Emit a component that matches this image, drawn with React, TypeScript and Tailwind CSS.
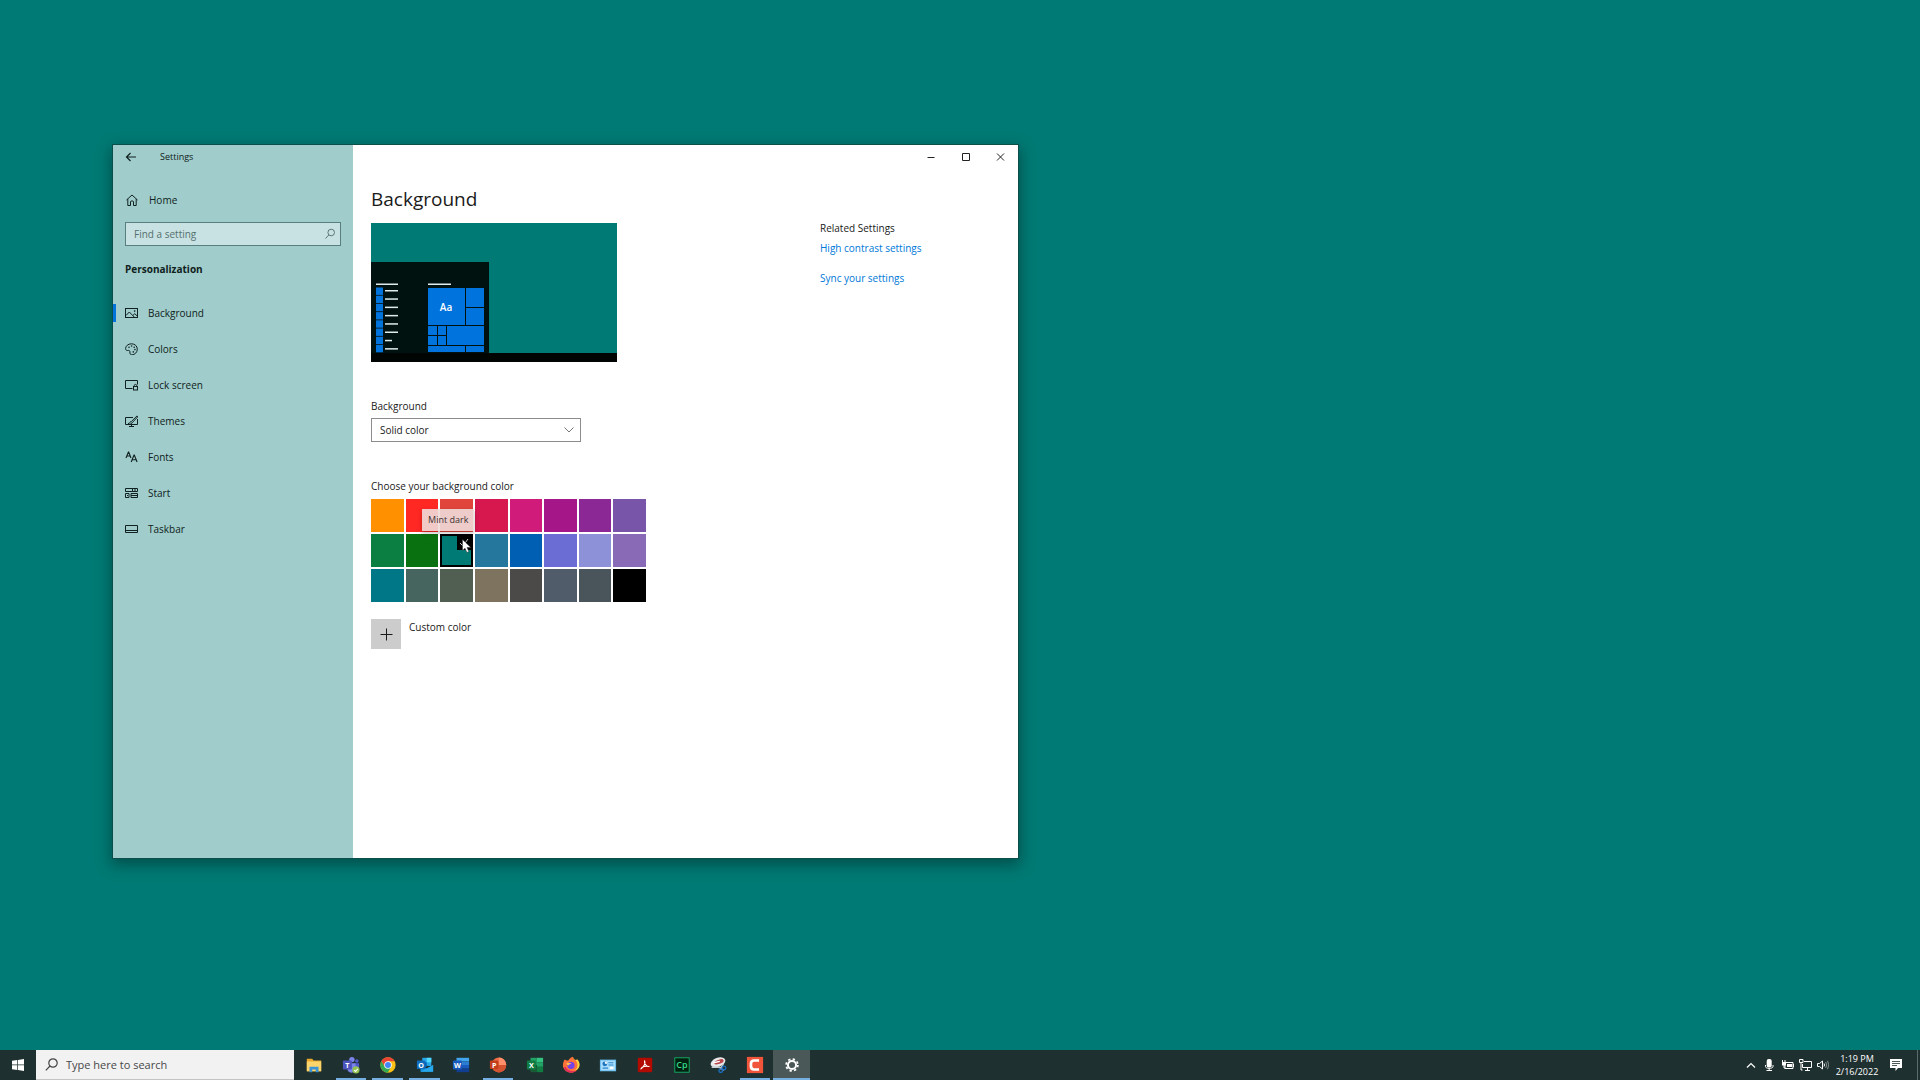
import React, { useState } from 'react'

const ink = { fill: 'none', stroke: 'currentColor', strokeWidth: 1 }

const navItems = [
  {
    name: 'Background',
    icon: <g {...ink}><rect x=".5" y="1.5" width="12" height="9" /><path d="M1 8.5 4.3 5l5.4 5.5M8 8.3l1.8-1.6 2.5 2.4" /><circle cx="9.7" cy="4" r=".5" /></g>,
  },
  {
    name: 'Colors',
    icon: <g {...ink}><path d="M6.5.8C3 .8.6 3 .6 5.6c0 1.5 1 2.2 2.1 1.9 1.3-.4 2.3.1 2.2 1.4-.2 1.8.5 3 2 3 2.8 0 5.4-2.6 5.4-5.7C12.3 3 9.9.8 6.5.8Z" /><g fill="currentColor" stroke="none"><circle cx="4" cy="4.3" r=".8" /><circle cx="6.6" cy="3" r=".8" /><circle cx="9.2" cy="4.2" r=".8" /><circle cx="9.9" cy="6.6" r=".8" /><circle cx="8.3" cy="8.9" r=".8" /></g></g>,
  },
  {
    name: 'Lock screen',
    icon: <g {...ink}><path d="M7.5 9.5h-7v-8h12v4" /><rect x="8.5" y="7.5" width="4" height="3.5" /><path d="M9.3 7.5V6.3c0-1.2 2.4-1.2 2.4 0v1.2" /></g>,
  },
  {
    name: 'Themes',
    icon: <g {...ink}><path d="M8 2.5H.5v7h12V4M4 11.5h5M6.5 9.5v2" /><path d="M12 .9 6.3 6.6l1 1L12.6 2ZM6.1 6.8C4.6 6.7 4.7 8.3 3.2 8.6c1.6.9 3.7.5 3.9-.9" /></g>,
  },
  {
    name: 'Fonts',
    icon: <g {...ink}><path d="M1 7 3.4 1h.3L6 7M1.8 5h3.5M6.2 11 9 4h.3l2.8 7M7.1 8.7h4.1" strokeWidth="1.1" /></g>,
  },
  {
    name: 'Start',
    icon: <g {...ink}><path d="M.5 1.5h7v3h-7zM7.5 1.5h5v3h-5zM.5 6.5h3.5v4H.5zM6 6.5h6.5v4H6zM6 8.5h6.5M10 1.5v3M2 8.5h1" /></g>,
  },
  {
    name: 'Taskbar',
    icon: <g {...ink}><path d="M.5 2.5h12v7H.5zM.5 7.5h12" /></g>,
  },
]

const colors = [
  { name: 'Yellow gold', bg: 'bg-[#ff9100]' },
  { name: 'Red', bg: 'bg-[#ff2823]' },
  { name: 'Pale red', bg: 'bg-[#e0443a]' },
  { name: 'Rose bright', bg: 'bg-[#d6184f]' },
  { name: 'Rose', bg: 'bg-[#d01b7b]' },
  { name: 'Plum light', bg: 'bg-[#a51688]' },
  { name: 'Orchid light', bg: 'bg-[#8c2796]' },
  { name: 'Iris', bg: 'bg-[#7855a9]' },
  { name: 'Meadow green', bg: 'bg-[#0b7e41]' },
  { name: 'Green', bg: 'bg-[#0a7110]' },
  { name: 'Mint dark', bg: 'bg-[#007a74]' },
  { name: 'Seafoam', bg: 'bg-[#26779e]' },
  { name: 'Default blue', bg: 'bg-[#005fb2]' },
  { name: 'Purple shadow', bg: 'bg-[#6b6dd5]' },
  { name: 'Lilac', bg: 'bg-[#8c91d8]' },
  { name: 'Violet', bg: 'bg-[#896ab6]' },
  { name: 'Teal', bg: 'bg-[#007787]' },
  { name: 'Liddy green', bg: 'bg-[#47655f]' },
  { name: 'Moss', bg: 'bg-[#505f52]' },
  { name: 'Camouflage', bg: 'bg-[#7e735f]' },
  { name: 'Overcast', bg: 'bg-[#4c4a48]' },
  { name: 'Metal blue', bg: 'bg-[#515c6b]' },
  { name: 'Storm', bg: 'bg-[#4a545b]' },
  { name: 'Black', bg: 'bg-black' },
]

const letter = { fill: '#fff', fontWeight: 700, fontFamily: 'Open Sans, sans-serif', textAnchor: 'middle' as const }

const taskbarApps = [
  {
    name: 'File Explorer',
    icon: <><path d="M2 3h6l1.5 2H18v12H2z" fill="#e8a62a" /><path d="M2 6h16v11H2z" fill="#fbd56b" /><path d="M5 12h10v6h-3v-3H8v3H5z" fill="#3a93d6" /></>,
  },
  {
    name: 'Microsoft Teams',
    open: true,
    icon: <><circle cx="11" cy="4" r="3" fill="#7b83eb" /><circle cx="16.5" cy="5.5" r="2" fill="#5059c9" /><path d="M13 8h6v6c0 2-2 3-4 3z" fill="#5059c9" /><path d="M6 8h9v6a4.5 4.5 0 0 1-9 0z" fill="#7b83eb" /><rect x="1" y="5" width="10" height="10" rx="1" fill="#4b53bc" /><text x="6" y="13" fontSize="8" {...letter}>T</text><circle cx="15.5" cy="15.5" r="4" fill="#92c353" /><path d="m13.5 15.6 1.5 1.5 2.6-2.8" fill="none" stroke="#fff" strokeWidth="1.2" /></>,
  },
  {
    name: 'Google Chrome',
    open: true,
    icon: <><circle cx="10" cy="10" r="8.5" fill="#fbc116" /><path d="M10 5.8h7.4A8.5 8.5 0 0 0 2.6 5.8L6.4 12Z" fill="#ea4335" /><path d="M2.6 5.8a8.5 8.5 0 0 0 7 12.7L13.6 12 6.4 12Z" fill="#34a853" /><circle cx="10" cy="10" r="4.2" fill="#fff" /><circle cx="10" cy="10" r="3.3" fill="#4285f4" /></>,
  },
  {
    name: 'Outlook',
    open: true,
    icon: <><path d="M7 2h10v9H7z" fill="#28a8ea" /><path d="M12 2h5v5h-5z" fill="#50d9ff" /><path d="M7 7h5v5H7z" fill="#0364b8" /><path d="M5 10l7 4 7-4v7.5H5z" fill="#1490df" /><path d="m5 17.5 14-7.5v7.5z" fill="#28a8ea" /><rect x="1" y="5" width="9.5" height="9.5" rx="1" fill="#0f6cbd" /><text x="5.8" y="12.8" fontSize="8" {...letter}>O</text></>,
  },
  {
    name: 'Word',
    icon: <><path d="M5 2h14v4H5z" fill="#41a5ee" /><path d="M5 6h14v4H5z" fill="#2b7cd3" /><path d="M5 10h14v4H5z" fill="#185abd" /><path d="M5 14h14v4H5z" fill="#103f91" /><rect x="1" y="5" width="10" height="10" rx="1" fill="#185abd" /><text x="6" y="13" fontSize="8" {...letter}>W</text></>,
  },
  {
    name: 'PowerPoint',
    open: true,
    icon: <><circle cx="11" cy="10" r="8.2" fill="#ed6c47" /><path d="M11 1.8a8.2 8.2 0 0 1 8.2 8.2H11z" fill="#ff8f6b" /><path d="M2.8 10h16.4a8.2 8.2 0 0 1-16.4 0z" fill="#d35230" /><rect x="1" y="5" width="9.5" height="9.5" rx="1" fill="#c43e1c" /><text x="5.8" y="12.8" fontSize="8" {...letter}>P</text></>,
  },
  {
    name: 'Excel',
    icon: <><path d="M5 2h7v8H5z" fill="#21a366" /><path d="M12 2h7v5h-7z" fill="#33c481" /><path d="M12 7h7v5h-7z" fill="#21a366" /><path d="M5 10h7v8H5z" fill="#185c37" /><path d="M12 12h7v6h-7z" fill="#107c41" /><rect x="1" y="5" width="10" height="10" rx="1" fill="#107c41" /><text x="6" y="13" fontSize="8" {...letter}>X</text></>,
  },
  {
    name: 'Firefox',
    icon: <><path d="M4 4.5C5 5 6 5.2 7 5c2-3 4-4 5-4.2 0 2 2 3 3.5 4 1-.3 1-.8 1-1.3 3 4 2.8 8 1 11a9 9 0 0 1-15.5-.5C0 10.5 1.5 6 3 4z" fill="#ff7139" /><path d="M12 .8c0 2 2 3 3.5 4.500 2.500 3 2.500 8-1.500 11 7-2 7-9 2.500-13 0 .5 0 1-1 1.500C14 3.500 12.500 2.500 12 .8z" fill="#ffd43d" /><path d="M2 13a9 9 0 0 0 15 2.500C12 18 6 17 4 12z" fill="#e5285e" /><circle cx="10" cy="10.5" r="4" fill="#7542e5" /><path d="M5 8c2-1 4 0 5.500 0-1 1.500-3 1-3 2.500C6 10.500 5.500 9.500 5 8z" fill="#ffbd4f" /></>,
  },
  {
    name: 'Control Panel',
    icon: <><rect x="1" y="4" width="18" height="13" fill="#5fb8ee" /><rect x="2" y="5" width="16" height="11" fill="#a9dcf8" /><circle cx="6.5" cy="8.7" r="2.7" fill="#1d74c2" /><path d="M6.5 8.7V6a2.7 2.7 0 0 1 2.7 2.7z" fill="#fff" /><path d="M10.5 7.500H16M10.500 10H16M4 13.500h6" stroke="#2d87cf" strokeWidth="1.2" /><rect x="12" y="12" width="4" height="2.500" fill="#fff" /></>,
  },
  {
    name: 'Adobe Acrobat',
    icon: <><rect x="2" y="2" width="16" height="16" rx="1.5" fill="#b30b00" /><path d="M9.500 5.300c1.500 4-1 6.700-4 9 1-2.500 5.500-3.500 9-2.600-3 0-5.500-3-5-6.400z" fill="none" stroke="#fff" strokeWidth="1.3" strokeLinejoin="round" /></>,
  },
  {
    name: 'Adobe Captivate',
    icon: <><rect x="2" y="2" width="16" height="16" fill="#00200f" stroke="#17b26a" /><text x="10" y="13.3" fontSize="10" {...letter} fontWeight={600} fill="#37d98b">Cp</text></>,
  },
  {
    name: 'Snipping Tool',
    icon: <><ellipse cx="10" cy="7" rx="8.5" ry="5" transform="rotate(-20 10 7)" fill="#e9e9ec" /><ellipse cx="11" cy="6.5" rx="5.5" ry="2.3" transform="rotate(-20 11 6.5)" fill="#b9454a" /><path d="M5 7.500 12 6" stroke="#fff" strokeWidth="1.5" /><path d="M3 12.500h9l4 4M16 9l-4 6" stroke="#c4ccd2" strokeWidth="1.5" fill="none" /><circle cx="13" cy="16.3" r="2" fill="none" stroke="#1c6dc0" strokeWidth="1.5" /><circle cx="16.7" cy="13.3" r="2" fill="none" stroke="#1c6dc0" strokeWidth="1.5" /></>,
  },
  {
    name: 'Camtasia',
    open: true,
    icon: <><rect x="1" y="1" width="18" height="18" fill="#f0553c" /><path d="M14.500 5H9Q5.500 5 5.500 8.500v3Q5.500 15 9 15h5.500" fill="none" stroke="#fff" strokeWidth="3" /></>,
  },
  {
    name: 'Settings',
    active: true,
    icon: <g fill="none" stroke="#fff"><circle cx="10" cy="10" r="4.5" strokeWidth="2.2" /><circle cx="10" cy="10" r="6.5" strokeWidth="2" strokeDasharray="2.55 2.555" /></g>,
  },
]

function DesktopPreview() {
  return (
    <svg viewBox="0 0 246 139" className="mt-[10px] block h-[139px] w-[246px]" role="img" aria-label="Desktop preview">
      <rect width="246" height="139" fill="#007a74" />
      <rect y="39" width="118" height="91" fill="#001210" />
      <rect y="130" width="246" height="9" fill="#000504" />
      <g fill="#0073dc">
        {[0, 1, 2, 3, 4, 5, 6, 7].map(i => (
          <rect key={i} x="5" y={64.5 + i * 8.2} width="7" height="7.4" />
        ))}
        <rect x="57" y="65" width="37" height="37" />
        <rect x="95" y="65" width="18" height="19" />
        <rect x="95" y="85" width="18" height="17" />
        <rect x="57" y="103" width="9" height="9" />
        <rect x="67" y="103" width="8" height="9" />
        <rect x="57" y="113" width="9" height="9" />
        <rect x="67" y="113" width="8" height="9" />
        <rect x="76" y="103" width="37" height="19" />
        <rect x="57" y="123" width="37" height="6" />
        <rect x="95" y="123" width="18" height="6" />
      </g>
      <g fill="#dfeceb">
        <rect x="5" y="60.5" width="22" height="1.5" />
        <rect x="57" y="60.5" width="23" height="1.5" />
        {[13, 13, 13, 13, 13, 13, 7, 13].map((w, i) => (
          <rect key={i} x="14" y={67 + i * 8.3} width={w} height="1.5" />
        ))}
      </g>
      <text x="75" y="88" fontSize="10" fontWeight="600" fill="#fff" textAnchor="middle">Aa</text>
    </svg>
  )
}

export default function App() {
  const [selected, setSelected] = useState('Mint dark')
  const [search, setSearch] = useState('')

  return (
    <div className="relative flex min-h-screen flex-col overflow-hidden bg-[#007a74] font-['Open_Sans','Noto_Sans',sans-serif] text-[10px] leading-4 text-[#1a1a1a]">
      {/* Settings window */}
      <div className="absolute left-[113px] top-[145px] flex min-h-[713px] w-[905px] shadow-[0_0_0_1px_#0b4f4b,0_5px_14px_2px_rgba(0,0,0,0.35)]">
        <aside className="w-60 shrink-0 bg-[#a0cdcb] text-[#0f2120]">
          <header className="flex h-6 items-center">
            <button aria-label="Back" className="flex h-6 w-9 items-center justify-center">
              <svg viewBox="0 0 12 12" className="h-3 w-3" {...ink}><path d="M11 6H1.500M5.500 2l-4 4 4 4" strokeWidth="1.2" /></svg>
            </button>
            <span className="ml-[11px] text-[9px]">Settings</span>
          </header>

          <a href="#home" className="mt-[21px] flex h-5 items-center gap-[11px] pl-[13px]">
            <svg viewBox="0 0 12 12" className="h-3 w-3" {...ink}><path d="M.5 6 6 1l5.500 5M1.800 5v6.500H4.500V7.500q1.500-1.500 3 0v4h2.700V5" /></svg>
            Home
          </a>

          <div className="relative mx-3 mt-3 w-[216px]">
            <input
              type="text"
              aria-label="Find a setting"
              placeholder="Find a setting"
              value={search}
              onChange={e => setSearch(e.target.value)}
              className="block h-6 w-full border border-[#567f7d] bg-[#c8e1e2] px-2 outline-none placeholder:text-[#54706f]"
            />
            <svg viewBox="0 0 12 12" className="absolute right-[5px] top-[6px] h-3 w-3 text-[#5d7776]" {...ink}><circle cx="7.2" cy="4.5" r="3.3" /><path d="M4.800 7 1.500 10.500" /></svg>
          </div>

          <h2 className="mt-[13px] pl-3 leading-5 font-bold">Personalization</h2>

          <nav className="mt-4">
            {navItems.map((item, i) => (
              <a key={item.name} href={`#${item.name}`} className="flex h-9 items-center">
                <span className={`h-[18px] w-[3px] ${i === 0 ? 'bg-[#0073dc]' : ''}`} />
                <svg viewBox="0 0 13 12" className="mr-[10px] ml-[9px] h-3 w-[13px]">{item.icon}</svg>
                {item.name}
              </a>
            ))}
          </nav>
        </aside>

        <main className="flex-1 bg-white">
          <div className="flex h-6 justify-end text-[#222]">
            <button aria-label="Minimize" className="flex w-[35px] items-center justify-center">
              <svg viewBox="0 0 9 9" className="h-[9px] w-[9px]" {...ink}><path d="M1.500 4.500h7" /></svg>
            </button>
            <button aria-label="Maximize" className="flex w-[35px] items-center justify-center">
              <svg viewBox="0 0 9 9" className="h-[9px] w-[9px]" {...ink}><path d="M1.500.5h7v7h-7z" /></svg>
            </button>
            <button aria-label="Close" className="flex w-[35px] items-center justify-center">
              <svg viewBox="0 0 9 9" className="h-[9px] w-[9px]" {...ink}><path d="m1 .5 7 7M8 .5l-7 7" /></svg>
            </button>
          </div>

          <div className="flex justify-between pr-[88px] pl-[18px]">
            <div>
              <h1 className="mt-4 text-[19px] leading-7">Background</h1>
              <DesktopPreview />

              <label htmlFor="bg-type" className="mt-9 block">Background</label>
              <div className="relative mt-1 w-[210px]">
                <select id="bg-type" className="block h-6 w-full appearance-none border border-[#8c8c8c] bg-white px-2 outline-none">
                  <option>Solid color</option>
                  <option>Picture</option>
                  <option>Slideshow</option>
                </select>
                <svg viewBox="0 0 10 6" className="pointer-events-none absolute top-[9px] right-[7px] h-[6px] w-[10px] text-[#777]" {...ink}><path d="m.5.5 4.500 4.500 4.500-4.500" /></svg>
              </div>

              <p id="color-label" className="mt-9">Choose your background color</p>
              <div role="group" aria-labelledby="color-label" className="mt-[5px] grid w-[275px] grid-cols-8 gap-[2px]">
                {colors.map(c => (
                  <button
                    key={c.name}
                    aria-label={c.name}
                    aria-pressed={selected === c.name}
                    onClick={() => setSelected(c.name)}
                    className={`relative h-[33px] ${c.bg} ${selected === c.name ? 'border-2 border-black' : ''}`}
                  >
                    {selected === c.name && (
                      <svg viewBox="0 0 14 14" className="absolute top-0 right-0 h-[14px] w-[14px]">
                        <path d="M0 0h14v14H0z" />
                        <path d="m3 7 3 3 5-7" fill="none" stroke="#ccc" />
                      </svg>
                    )}
                    {c.name === 'Mint dark' && (
                      <>
                        <span role="tooltip" className="absolute bottom-[34px] left-[-20px] flex h-[22px] w-[52px] items-center justify-center bg-[#efdcda]/90 text-[9px] whitespace-nowrap text-[#3d3232] shadow-[0_2px_4px_rgba(0,0,0,0.25)]">
                          Mint dark
                        </span>
                        <svg viewBox="0 0 10 15" className="absolute top-[3px] left-[20px] z-10 h-[15px] w-[10px]">
                          <path d="M.5.5v11L3 9.200l1.900 4.300 2-.9L5 8.500h3.800z" fill="#fff" stroke="#333" strokeWidth=".5" />
                        </svg>
                      </>
                    )}
                  </button>
                ))}
              </div>

              <div className="mt-[17px] flex gap-2">
                <button id="custom-color" aria-labelledby="custom-label" className="flex h-[30px] w-[30px] items-center justify-center bg-[#cccccc]">
                  <svg viewBox="0 0 13 13" className="h-[13px] w-[13px]" {...ink}><path d="M6.500.5v12M.5 6.500h12" /></svg>
                </button>
                <label id="custom-label" htmlFor="custom-color">Custom color</label>
              </div>
            </div>

            <div className="mt-[51px] flex w-[110px] flex-col whitespace-nowrap">
              <h2>Related Settings</h2>
              <a href="#contrast" className="mt-1 text-[#0078d7]">High contrast settings</a>
              <a href="#sync" className="mt-[14px] text-[#0078d7]">Sync your settings</a>
            </div>
          </div>
        </main>
      </div>

      {/* Taskbar */}
      <footer className="mt-auto flex h-[30px] items-stretch bg-[#1e302f] text-white">
        <button aria-label="Start" className="flex w-9 items-center justify-center">
          <svg viewBox="0 0 12 12" className="h-3 w-3" fill="#fff"><path d="M0 1.700 5.300 1v4.600H0zM6 .9l6-.9v5.600H6zM0 6.300h5.300v4.700L0 10.300zM6 6.300h6V12l-6-.9z" /></svg>
        </button>
        <label className="flex w-[258px] items-center gap-2 border-b border-[#c4c4c4] bg-[#f2f2f2] pl-[9px] text-[11px] text-[#444]">
          <svg viewBox="0 0 13 13" className="h-[13px] w-[13px] shrink-0" {...ink}><circle cx="8" cy="5" r="4.2" strokeWidth="1.2" /><path d="M5 8 .8 12.300" strokeWidth="1.2" /></svg>
          <input type="text" aria-label="Type here to search" placeholder="Type here to search" className="w-full bg-transparent outline-none placeholder:text-[#484848]" />
        </label>

        <div className="ml-[2px] flex w-[514px]">
          {taskbarApps.map(app => (
            <button
              key={app.name}
              aria-label={app.name}
              className={`relative flex flex-1 items-center justify-center ${app.active ? 'bg-[#4a5958]' : ''}`}
            >
              <svg viewBox="0 0 20 20" className="h-[18px] w-[18px]">{app.icon}</svg>
              {app.open && <span className="absolute inset-x-[3px] bottom-0 h-[2px] bg-[#76b0e2]" />}
              {app.active && <span className="absolute inset-x-0 bottom-0 h-[2px] bg-[#76b0e2]" />}
            </button>
          ))}
        </div>

        <div className="ml-auto flex items-center">
          <button aria-label="Show hidden icons" className="flex w-[18px] justify-center">
            <svg viewBox="0 0 10 6" className="h-[6px] w-[10px]" {...ink}><path d="m1 5.500 4-4 4 4" strokeWidth="1.2" /></svg>
          </button>
          <button aria-label="Microphone" className="flex w-[18px] justify-center">
            <svg viewBox="0 0 10 12" className="h-3 w-[10px]"><rect x="2.7" width="5" height="8.500" rx="2" fill="#fff" /><path d="M1.500 6v1.500c0 2.500 7.500 2.500 7.500 0V6M5.200 9v2.500M2.500 11.500h5.500" {...ink} /></svg>
          </button>
          <button aria-label="Battery" className="flex w-[18px] justify-center">
            <svg viewBox="0 0 13 10" className="h-[10px] w-[13px]"><path d="M4 2.500h8v6H4z" {...ink} /><path d="M6 4h5v3H6zM12 4h1v3h-1zM1 2h4v3.500H1z" fill="#fff" /><path d="M1.500 0v2M4 0v2M3 5v3h1" {...ink} /></svg>
          </button>
          <button aria-label="Network" className="flex w-[18px] justify-center">
            <svg viewBox="0 0 13 12" className="h-3 w-[13px]" {...ink}><path d="M5 2.500h7.500v6H3.500V5M6 11.500h5M8.500 8.500v3M.5.500h3.500v3H.5zM2 3.500V11h1.500" /></svg>
          </button>
          <button aria-label="Volume" className="flex w-[18px] justify-center">
            <svg viewBox="0 0 12 10" className="h-[10px] w-3" {...ink}><path d="M.5 3.500H2.500L5.500 1v8L2.500 6.500H.5zM7 3.500q1 1.500 0 3" /><path d="M8.700 2q2 3 0 6M10.500.8q2.500 4 0 8.400" opacity=".45" /></svg>
          </button>
          <button className="w-[50px] text-center text-[9px] leading-[13px]">
            <span className="block">1:19 PM</span>
            <span className="block">2/16/2022</span>
          </button>
          <button aria-label="Notifications" className="flex w-7 justify-center">
            <svg viewBox="0 0 12 12" className="h-3 w-3"><path d="M0 0h12v9H8l-2.500 3V9H0z" fill="#fff" /><path d="M2 2.500h8M2 4.500h8M2 6.500h5" stroke="#1e302f" strokeWidth=".8" /></svg>
          </button>
          <button aria-label="Show desktop" className="ml-[7px] h-[30px] w-[3px] border-l border-[#5d6b6a]" />
        </div>
      </footer>
    </div>
  )
}
